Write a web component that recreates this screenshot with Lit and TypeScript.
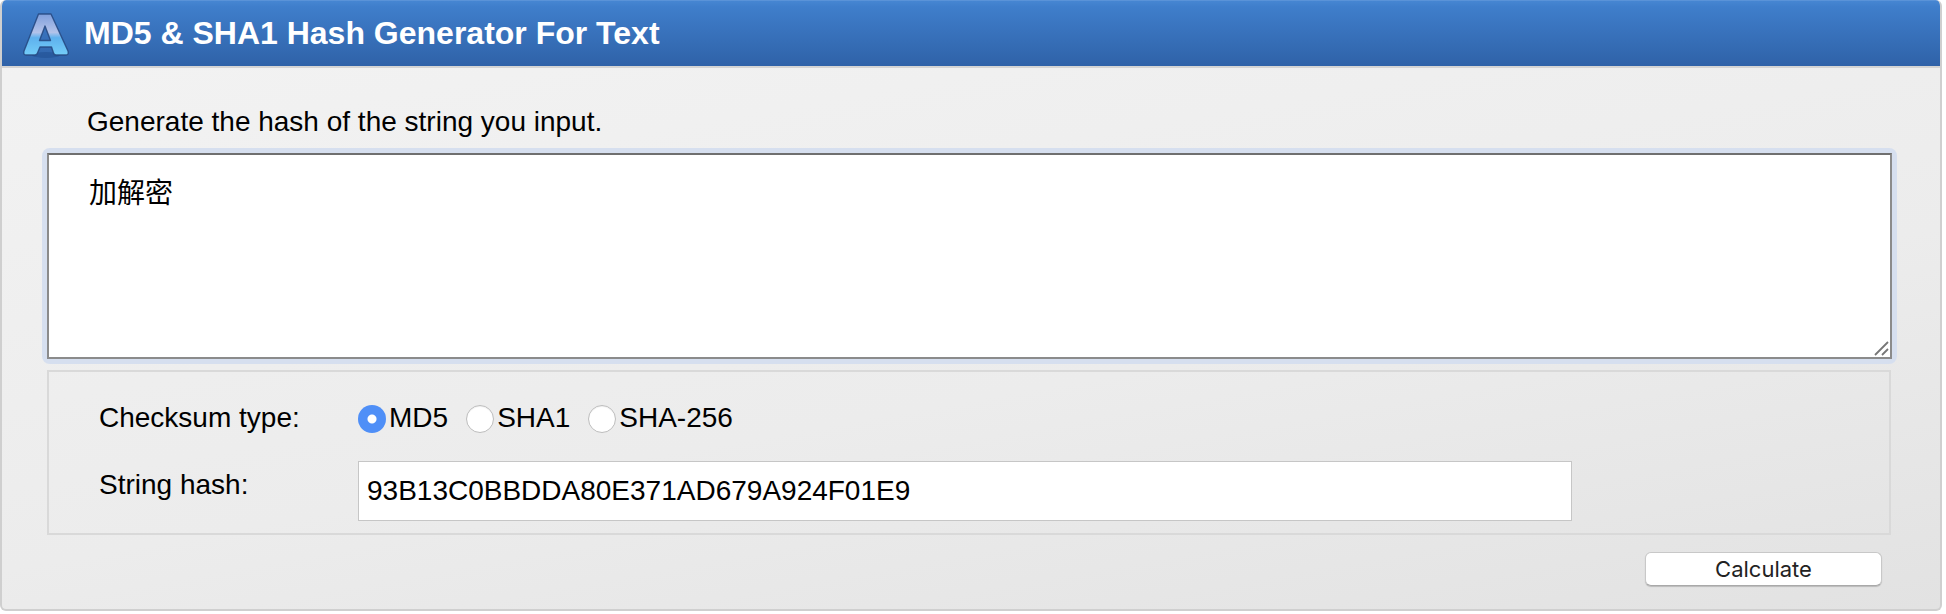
import { LitElement, html, css, svg } from "lit";
import { customElement, state } from "lit/decorators.js";

const TYPES = ["MD5", "SHA1", "SHA-256"];

@customElement("app-root")
export class AppRoot extends LitElement {
  @state() private kind = "MD5";

  static styles = css`
    :host { display: block; width: 1946px; height: 614px; background: #fff; font-family: "Liberation Sans", "Noto Sans CJK SC", sans-serif; color: #000; overflow: hidden; }
    * { box-sizing: border-box; }
    .window { height: 611px; margin-right: 4px; display: flex; flex-direction: column; border: solid #cfcfcf; border-width: 0 2px 2px 2px; border-radius: 6px; background: linear-gradient(170deg, #f3f3f3 0%, #ececec 60%, #e2e2e2 100%); overflow: hidden; }
    .header { flex: none; height: 66px; display: flex; align-items: center; gap: 15px; padding-left: 21px; background: linear-gradient(#4686d2 0, #3f7ecb 6px, #2f62a8 100%); border-top: 1px solid #5a93d8; box-shadow: 0 2px 0 #d4d4d4; }
    .logo { width: 46px; height: 46px; flex: none; margin-top: 2px; }
    .title { font-size: 32px; font-weight: 700; color: #fff; }
    .body { flex: 1; display: flex; flex-direction: column; padding: 0 48px 0 45px; }
    .intro { margin: 39px 0 0 40px; font-size: 28px; line-height: 34px; }
    .area { position: relative; margin-top: 14px; height: 206px; border-radius: 3px; box-shadow: 0 0 0 5px #d6dfef; }
    textarea { display: block; width: 100%; height: 100%; resize: none; outline: none; border: 2px solid #8b8b8b; border-top-color: #6f6f6f; background: #fff; font: 28px/34px "Liberation Sans", "Noto Sans CJK SC", sans-serif; padding: 22px 40px; color: #000; }
    .grip { position: absolute; right: 3px; bottom: 3px; width: 16px; height: 16px; }
    .panel { margin-top: 11px; height: 165px; border: 2px solid #d9d9d9; padding: 29px 0 0 50px; margin-right: 1px; display: flex; flex-direction: column; }
    .row { display: flex; align-items: center; font-size: 28px; }
    .row.hash { margin-top: 26px; align-items: flex-start; }
    .key { width: 259px; flex: none; }
    .hash .key { margin-top: 8px; }
    .radios { display: flex; align-items: center; height: 34px; }
    label { display: flex; align-items: center; gap: 3px; margin-right: 18px; }
    input[type="radio"] { appearance: none; margin: 2px 0 0; width: 28px; height: 28px; border-radius: 50%; background: #fff; border: 1px solid #bdbdbd; box-shadow: inset 0 1px 1px rgba(0,0,0,.06); }
    input[type="radio"]:checked { border: none; box-shadow: none; background: radial-gradient(circle, #fff 0, #fff 4px, #4f8ff7 5px); }
    .out { width: 1214px; height: 60px; border: 1.5px solid #c6c6c6; background: #fff; font: 28px "Liberation Sans", sans-serif; padding: 0 8px; outline: none; color: #000; }
    .actions { display: flex; justify-content: flex-end; margin-top: 17px; padding-right: 10px; }
    button { width: 237px; height: 34px; border: 1px solid #c8c8c8; border-bottom-color: #a9a9a9; border-radius: 6px; background: #fff; box-shadow: 0 1px 1px rgba(0,0,0,.18); font: 22px "Inter", "Liberation Sans", sans-serif; color: #222; padding: 0; }
  `;

  private logo() {
    return svg`<defs>
      <linearGradient id="g" x1="0" y1="0" x2="0" y2="1">
        <stop offset="0" stop-color="#7f9fdc"/><stop offset=".45" stop-color="#b3c3ea"/>
        <stop offset=".58" stop-color="#5eb1ee"/><stop offset="1" stop-color="#74cdf8"/>
      </linearGradient></defs>
      <ellipse cx="22" cy="43" rx="14" ry="3" fill="#1d4a8c" opacity=".45"/>
      <path fill-rule="evenodd" fill="url(#g)" stroke="#24477f" stroke-opacity=".85" stroke-width="1.4" stroke-linejoin="round" d="M14.500 2H27L44 39Q45 43 42 43H32Q30 43 29.500 41L27.500 35H16L13.500 41Q13 43 11 43H2Q-1 43 0 39ZM21 14L15.500 28.500H26.500Z"/>`;
  }

  render() {
    return html`<div class="window">
      <div class="header">
        <svg class="logo" viewBox="-1 0 46 46">${this.logo()}</svg>
        <div class="title">MD5 &amp; SHA1 Hash Generator For Text</div>
      </div>
      <div class="body">
        <div class="intro">Generate the hash of the string you input.</div>
        <div class="area">
          <textarea .value=${"加解密"}></textarea>
          <svg class="grip" viewBox="0 0 16 16"><path d="M2 15L15 2M9 15L15 9" stroke="#777" stroke-width="1.8" fill="none"/></svg>
        </div>
        <div class="panel">
          <div class="row">
            <div class="key">Checksum type:</div>
            <div class="radios">
              ${TYPES.map((t) => html`<label><input type="radio" name="k" .checked=${t === this.kind} @change=${() => (this.kind = t)} />${t}</label>`)}
            </div>
          </div>
          <div class="row hash">
            <div class="key">String hash:</div>
            <input class="out" .value=${"93B13C0BBDDA80E371AD679A924F01E9"} />
          </div>
        </div>
        <div class="actions"><button>Calculate</button></div>
      </div>
    </div>`;
  }
}
